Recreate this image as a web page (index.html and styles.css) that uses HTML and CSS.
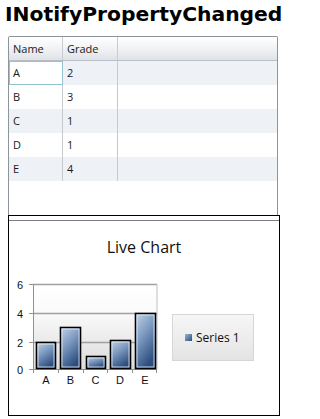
FILE: index.html
```html
<!DOCTYPE html>
<html>
<head>
<meta charset="utf-8">
<link rel="stylesheet" href="styles.css">
</head>
<body>
<h1 class="title">INotifyPropertyChanged</h1>
<div class="grid">
  <div class="row header">
    <div class="cell c1">Name</div>
    <div class="cell c2">Grade</div>
    <div class="cell c3"></div>
  </div>
  <div class="row alt">
    <div class="cell c1 selected">A</div>
    <div class="cell c2">2</div>
    <div class="cell c3"></div>
  </div>
  <div class="row">
    <div class="cell c1">B</div>
    <div class="cell c2">3</div>
    <div class="cell c3"></div>
  </div>
  <div class="row alt">
    <div class="cell c1">C</div>
    <div class="cell c2">1</div>
    <div class="cell c3"></div>
  </div>
  <div class="row">
    <div class="cell c1">D</div>
    <div class="cell c2">1</div>
    <div class="cell c3"></div>
  </div>
  <div class="row alt">
    <div class="cell c1">E</div>
    <div class="cell c2">4</div>
    <div class="cell c3"></div>
  </div>
</div>
<div class="chart">
  <div class="splitter"></div>
  <div class="chart-title">Live Chart</div>
  <div class="chart-body">
    <svg class="plot" width="160" height="116" viewBox="0 0 160 116" xmlns="http://www.w3.org/2000/svg">
      <defs>
        <linearGradient id="bg" x1="0" y1="0" x2="0" y2="1">
          <stop offset="0" stop-color="#ffffff"/>
          <stop offset="0.3" stop-color="#fbfbfb"/>
          <stop offset="1" stop-color="#dcdcdc"/>
        </linearGradient>
        <linearGradient id="bar" x1="0" y1="0" x2="0.5" y2="1">
          <stop offset="0" stop-color="#c4d3e6"/>
          <stop offset="0.45" stop-color="#7f9cc2"/>
          <stop offset="1" stop-color="#2c4d7e"/>
        </linearGradient>
      </defs>
      <rect x="24" y="10" width="124" height="85" fill="url(#bg)"/>
      <line x1="24" y1="10.5" x2="148" y2="10.5" stroke="#a0a0a0" stroke-width="1.5"/>
      <line x1="24" y1="39.5" x2="148" y2="39.5" stroke="#a0a0a0" stroke-width="1.5"/>
      <line x1="24" y1="68.5" x2="148" y2="68.5" stroke="#a0a0a0" stroke-width="1.5"/>
      <line x1="148" y1="10" x2="148" y2="95" stroke="#c0c0c0" stroke-width="1"/>
      <line x1="24.5" y1="10" x2="24.5" y2="96" stroke="#909090" stroke-width="1"/>
      <line x1="24" y1="95.5" x2="148" y2="95.5" stroke="#909090" stroke-width="1"/>
      <g stroke="#909090" stroke-width="1">
        <line x1="20" y1="10.5" x2="24" y2="10.5"/>
        <line x1="20" y1="39.5" x2="24" y2="39.5"/>
        <line x1="20" y1="68.5" x2="24" y2="68.5"/>
        <line x1="20" y1="95.5" x2="24" y2="95.5"/>
        <line x1="24.5" y1="95" x2="24.5" y2="99"/>
        <line x1="49.5" y1="95" x2="49.5" y2="99"/>
        <line x1="74.5" y1="95" x2="74.5" y2="99"/>
        <line x1="98.5" y1="95" x2="98.5" y2="99"/>
        <line x1="123.5" y1="95" x2="123.5" y2="99"/>
        <line x1="147.5" y1="95" x2="147.5" y2="99"/>
      </g>
      <g class="bars">
        <rect x="27.5" y="68.5" width="19" height="26" fill="url(#bar)" stroke="#000" stroke-width="1.6"/>
        <rect x="51.5" y="53.5" width="20" height="41" fill="url(#bar)" stroke="#000" stroke-width="1.6"/>
        <rect x="77.5" y="82.5" width="19" height="12" fill="url(#bar)" stroke="#000" stroke-width="1.6"/>
        <rect x="101.5" y="66.5" width="20" height="28" fill="url(#bar)" stroke="#000" stroke-width="1.6"/>
        <rect x="126.5" y="39.5" width="20" height="55" fill="url(#bar)" stroke="#000" stroke-width="1.6"/>
      </g>
      <g fill="none" stroke="#e8eef6" stroke-width="0.8">
        <rect x="29" y="70" width="16" height="23"/>
        <rect x="53" y="55" width="17" height="38"/>
        <rect x="79" y="84" width="16" height="9"/>
        <rect x="103" y="68" width="17" height="25"/>
        <rect x="128" y="41" width="17" height="52"/>
      </g>
      <g class="ylab" text-anchor="end">
        <text x="14" y="14.5">6</text>
        <text x="14" y="43.5">4</text>
        <text x="14" y="72.5">2</text>
        <text x="14" y="99.5">0</text>
      </g>
      <g class="xlab" text-anchor="middle">
        <text x="37" y="110">A</text>
        <text x="61.5" y="110">B</text>
        <text x="86.5" y="110">C</text>
        <text x="111" y="110">D</text>
        <text x="136" y="110">E</text>
      </g>
    </svg>
    <div class="legend">
      <span class="swatch"></span><span class="legend-text">Series 1</span>
    </div>
  </div>
</div>
</body>
</html>
```
FILE: styles.css
```css
html, body {
  margin: 0;
  padding: 0;
  background: #ffffff;
}
body {
  width: 282px;
  height: 419px;
  overflow: hidden;
  font-family: "Open Sans", "Noto Sans", sans-serif;
}
.title {
  margin: 0;
  padding: 2px 0 0 5px;
  height: 33px;
  box-sizing: border-box;
  font-family: "DejaVu Sans", Verdana, sans-serif;
  font-weight: bold;
  font-size: 20.3px;
  line-height: 25px;
  color: #000;
  white-space: nowrap;
}
.grid {
  margin-top: 3px;
  margin-left: 8px;
  width: 270px;
  height: 179px;
  box-sizing: border-box;
  border: 1px solid #8e949c;
  border-bottom: none;
  border-radius: 2px 2px 0 0;
  background: #fff;
}
.row {
  display: flex;
  height: 24px;
  background: #fff;
}
.row.alt {
  background: #eef1f6;
}
.row.header {
  height: 24px;
  background: linear-gradient(#ffffff, #f4f5f7 40%, #dfe2e7);
  border-bottom: 1px solid #b9bec6;
  box-sizing: border-box;
}
.cell {
  box-sizing: border-box;
  font-size: 11px;
  line-height: 24px;
  color: #1a1a1a;
  padding-left: 4px;
}
.header .cell {
  line-height: 23px;
}
.c1 {
  width: 54px;
  border-right: 1px solid #c6c9ce;
}
.c2 {
  width: 55px;
  border-right: 1px solid #c6c9ce;
}
.c3 {
  flex: 1;
}
.header .c1, .header .c2 {
  border-right: 1px solid #c9ccd2;
}
.cell.selected {
  border: 1px solid #93c3d3;
  background: #fff;
  line-height: 22px;
  padding-left: 3px;
}
.chart {
  margin-left: 8px;
  width: 272px;
  height: 201px;
  box-sizing: border-box;
  border: 1px solid #000;
  background: #fff;
}
.splitter {
  margin-top: 4px;
  height: 1px;
  background: #7c8088;
}
.chart-title {
  margin-top: 16px;
  height: 20px;
  text-align: center;
  font-size: 16px;
  line-height: 20px;
  color: #111;
}
.chart-body {
  display: flex;
  align-items: flex-start;
  margin-top: 17px;
}
.plot {
  display: block;
  flex: none;
}
.plot text {
  font-family: "Liberation Sans", Arial, sans-serif;
  font-size: 11px;
  fill: #111;
}
.legend {
  margin-top: 40px;
  margin-left: 3px;
  width: 82px;
  height: 47px;
  box-sizing: border-box;
  border: 1px solid #d6d6d6;
  background: linear-gradient(#f6f6f6, #e4e4e4);
  display: flex;
  align-items: center;
  padding-left: 12px;
}
.swatch {
  display: inline-block;
  width: 7px;
  height: 7px;
  background: linear-gradient(135deg, #9db3d2, #2c4d7e);
  margin-right: 4px;
}
.legend-text {
  font-size: 12px;
  line-height: 14px;
  color: #111;
}
```
